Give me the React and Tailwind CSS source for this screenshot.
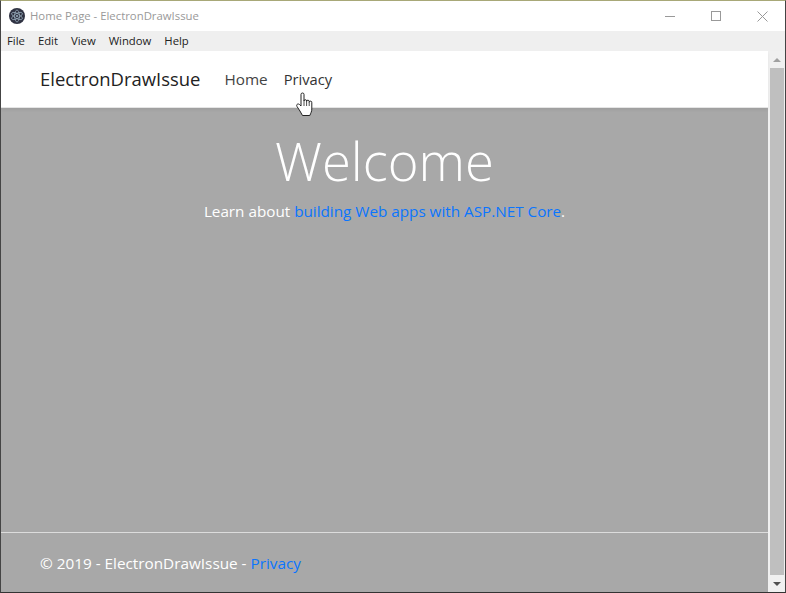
import React from 'react';

const ui = { fontFamily: '"Open Sans", "Noto Sans", sans-serif' };

const HandCursor = () => (
  <svg width="18" height="25" viewBox="0 0 18 25" className="absolute left-[295px] top-[41px]">
    <path
      d="M5 2.5a1.5 1.5 0 0 1 3 0V9a1.3 1.3 0 0 1 2.6 0v.5a1.3 1.3 0 0 1 2.6 0v.7a1.3 1.3 0 0 1 2.6.5V17c0 2.5-1 4-2 6.500H6.500C5 20.500 3 17.500 1 14.500C0 13 1.500 11 3.500 12.500L5 14Z"
      fill="#fff"
      stroke="#222"
      strokeWidth="1"
      strokeLinejoin="round"
    />
    <path d="M8 9v5M10.600 9.500v4.500M13.200 10v4" stroke="#222" strokeWidth="0.8" fill="none" />
  </svg>
);

const ElectronLogo = () => (
  <svg width="16" height="16" viewBox="0 0 16 16">
    <circle cx="8" cy="8" r="8" fill="#2f3242" />
    <g fill="none" stroke="#9fb4c4" strokeWidth="0.7">
      <ellipse cx="8" cy="8" rx="6" ry="2.4" transform="rotate(30 8 8)" />
      <ellipse cx="8" cy="8" rx="6" ry="2.4" transform="rotate(90 8 8)" />
      <ellipse cx="8" cy="8" rx="6" ry="2.4" transform="rotate(150 8 8)" />
    </g>
    <circle cx="8" cy="8" r="1" fill="#9fb4c4" />
  </svg>
);

const WindowButtons = () => (
  <div className="flex items-center">
    <div className="w-[46px] flex justify-center">
      <svg width="11" height="11" viewBox="0 0 11 11"><path d="M0 5.500h10" stroke="#999" strokeWidth="1" /></svg>
    </div>
    <div className="w-[46px] flex justify-center">
      <svg width="11" height="11" viewBox="0 0 11 11"><rect x="0.500" y="0.500" width="9" height="9" fill="none" stroke="#999" strokeWidth="1" /></svg>
    </div>
    <div className="w-[46px] flex justify-center">
      <svg width="11" height="11" viewBox="0 0 11 11"><path d="M0.500 0.500l10 10M10.500 0.500l-10 10" stroke="#999" strokeWidth="1" /></svg>
    </div>
  </div>
);

const App = () => {
  const menu = ['File', 'Edit', 'View', 'Window', 'Help'];

  return (
    <div className="relative w-[786px] h-[593px] flex flex-col overflow-hidden bg-white border-x border-b border-t border-x-[#444] border-b-[#333] border-t-[#a8a878]" style={ui}>
      {/* Title bar */}
      <div className="h-[30px] flex items-center justify-between bg-white">
        <div className="flex items-center pl-2 gap-[5px]">
          <ElectronLogo />
          <span className="text-[11.35px] text-[#999]">Home Page - ElectronDrawIssue</span>
        </div>
        <WindowButtons />
      </div>

      {/* Menu bar */}
      <div className="h-5 flex items-center gap-[13px] pl-[6px] bg-[#efefef] text-[11.3px] text-[#222]">
        {menu.map((item) => (
          <span key={item}>{item}</span>
        ))}
      </div>

      <div className="flex-1 flex min-h-0 bg-[#efefef]">
        <div className="relative flex-1 flex flex-col bg-[#a8a8a8]">
          {/* Navbar */}
          <div className="h-[57px] flex items-center pl-[39px] bg-white border-b border-[#e5e5e5] shadow-[0_2px_3px_rgba(0,0,0,0.06)]">
            <span className="text-[18.45px] text-[#222] mr-6">ElectronDrawIssue</span>
            <span className="text-[15.3px] text-[#444] mr-4">Home</span>
            <span className="text-[14.7px] text-[#333]">Privacy</span>
          </div>

          {/* Main */}
          <div className="flex-1 flex flex-col items-center text-white">
            <h1 className="mt-[16px] text-[52.6px] leading-[74px] font-light">Welcome</h1>
            <p className="mt-[2px] text-[15.25px]">
              Learn about <span className="text-[#0a75ff]">building Web apps with ASP.NET Core</span>.
            </p>
          </div>

          {/* Footer */}
          <div className="h-[60px] flex items-center pl-[39px] pt-[2px] border-t border-[#dcdcdc] text-white text-[15.3px]">
            <span>© 2019 - ElectronDrawIssue - <span className="text-[#0a75ff]">Privacy</span></span>
          </div>

          <HandCursor />
        </div>

        {/* Scrollbar */}
        <div className="w-[17px] flex flex-col items-center bg-[#f0f0f0]">
          <div className="h-[17px] flex items-center justify-center">
            <div className="w-0 h-0 border-x-[4px] border-x-transparent border-b-[4px] border-b-[#a0a0a0]" />
          </div>
          <div className="flex-1 w-[14px] bg-[#bfbfbf]" />
          <div className="h-[17px] flex items-center justify-center">
            <div className="w-0 h-0 border-x-[4px] border-x-transparent border-t-[4px] border-t-[#505050]" />
          </div>
        </div>
      </div>
    </div>
  );
};

export default App;
